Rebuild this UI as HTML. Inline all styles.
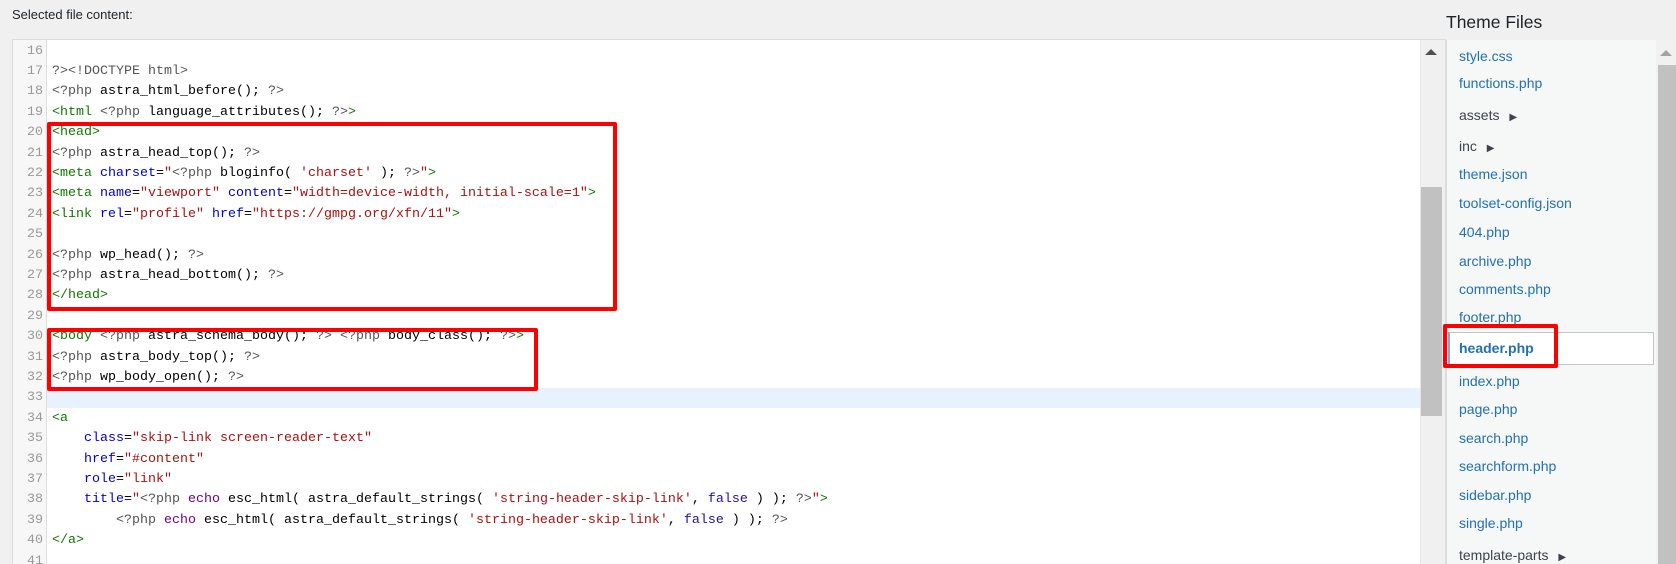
<!DOCTYPE html>
<html><head><style>
*{margin:0;padding:0;box-sizing:border-box}
html,body{width:1676px;height:564px;overflow:hidden}
body{background:#f0f0f1;position:relative;font-family:"Liberation Sans",sans-serif}
.abs{position:absolute}
#lbl{left:12px;top:7px;font-size:13px;color:#1d2327}
#ttl{left:1446px;top:12px;font-size:17.5px;color:#1d2327}
#ed{left:12px;top:39px;width:1434px;height:540px;background:#fff;border:1px solid #dcdcde}
#gut{left:13px;top:40px;width:34px;height:540px;background:#f7f7f7;border-right:1px solid #ddd}
.ln{position:absolute;left:13px;width:30px;text-align:right;font:13.33px "Liberation Mono",monospace;color:#999;height:20.4px;line-height:20.4px}
.cl{position:absolute;left:52px;font:13.33px "Liberation Mono",monospace;color:#000;white-space:pre;height:20.4px;line-height:20.4px}
.p{color:#555}.t{color:#170}.a{color:#00c}.s{color:#a11}.k{color:#708}.b{color:#219}
#hl{left:47px;top:388px;width:1373px;height:20px;background:#e8f2fe}
#sb{left:1420px;top:40px;width:25px;height:540px;background:#f0f0f0;border-left:1px solid #e6e6e6}
#sbt{left:1421px;top:187px;width:21px;height:229px;background:#c1c1c1}
#pan{left:1446px;top:40px;width:230px;height:540px;background:#f6f7f7;border-left:1px solid #dcdcde}
.f{position:absolute;left:1459px;font-size:14px;color:#2271b1;line-height:18px;height:18px;margin-top:-9px}
.d{color:#3c434a}
#sel{left:1448px;top:332px;width:206px;height:33px;background:#fff;border:1px solid #c3c4c7;border-left:2px solid #72aee6}
#rsb{left:1656px;top:40px;width:20px;height:540px;background:#f1f1f1}
#rsbt{left:1658px;top:65px;width:18px;height:520px;background:#c1c1c1}
.red{position:absolute;border:4.5px solid #f00;border-radius:2px}
.tri{position:absolute;width:0;height:0;border-left:6px solid transparent;border-right:6px solid transparent}
</style></head><body>
<div class="abs" id="lbl">Selected file content:</div>
<div class="abs" id="ttl">Theme Files</div>
<div class="abs" id="ed"></div>
<div class="abs" id="gut"></div>
<div class="abs" id="hl"></div>

<div class="ln" style="top:42px">16</div>
<div class="ln" style="top:62px">17</div>
<div class="ln" style="top:82px">18</div>
<div class="ln" style="top:103px">19</div>
<div class="ln" style="top:123px">20</div>
<div class="ln" style="top:144px">21</div>
<div class="ln" style="top:164px">22</div>
<div class="ln" style="top:184px">23</div>
<div class="ln" style="top:205px">24</div>
<div class="ln" style="top:225px">25</div>
<div class="ln" style="top:246px">26</div>
<div class="ln" style="top:266px">27</div>
<div class="ln" style="top:286px">28</div>
<div class="ln" style="top:307px">29</div>
<div class="ln" style="top:327px">30</div>
<div class="ln" style="top:348px">31</div>
<div class="ln" style="top:368px">32</div>
<div class="ln" style="top:388px">33</div>
<div class="ln" style="top:409px">34</div>
<div class="ln" style="top:429px">35</div>
<div class="ln" style="top:450px">36</div>
<div class="ln" style="top:470px">37</div>
<div class="ln" style="top:490px">38</div>
<div class="ln" style="top:511px">39</div>
<div class="ln" style="top:531px">40</div>
<div class="ln" style="top:552px">41</div>

<div class="cl" style="top:62px"><span class="p">?&gt;&lt;!DOCTYPE html&gt;</span></div>
<div class="cl" style="top:82px"><span class="p">&lt;?php</span> astra_html_before(); <span class="p">?&gt;</span></div>
<div class="cl" style="top:103px"><span class="t">&lt;html</span> <span class="p">&lt;?php</span> language_attributes(); <span class="p">?&gt;</span><span class="t">&gt;</span></div>
<div class="cl" style="top:123px"><span class="t">&lt;head&gt;</span></div>
<div class="cl" style="top:144px"><span class="p">&lt;?php</span> astra_head_top(); <span class="p">?&gt;</span></div>
<div class="cl" style="top:164px"><span class="t">&lt;meta</span> <span class="a">charset</span>=<span class="s">"</span><span class="p">&lt;?php</span> bloginfo( <span class="s">'charset'</span> ); <span class="p">?&gt;</span><span class="s">"</span><span class="t">&gt;</span></div>
<div class="cl" style="top:184px"><span class="t">&lt;meta</span> <span class="a">name</span>=<span class="s">"viewport"</span> <span class="a">content</span>=<span class="s">"width=device-width, initial-scale=1"</span><span class="t">&gt;</span></div>
<div class="cl" style="top:205px"><span class="t">&lt;link</span> <span class="a">rel</span>=<span class="s">"profile"</span> <span class="a">href</span>=<span class="s">"https://gmpg.org/xfn/11"</span><span class="t">&gt;</span></div>
<div class="cl" style="top:246px"><span class="p">&lt;?php</span> wp_head(); <span class="p">?&gt;</span></div>
<div class="cl" style="top:266px"><span class="p">&lt;?php</span> astra_head_bottom(); <span class="p">?&gt;</span></div>
<div class="cl" style="top:286px"><span class="t">&lt;/head&gt;</span></div>
<div class="cl" style="top:327px"><span class="t">&lt;body</span> <span class="p">&lt;?php</span> astra_schema_body(); <span class="p">?&gt;</span> <span class="p">&lt;?php</span> body_class(); <span class="p">?&gt;</span><span class="t">&gt;</span></div>
<div class="cl" style="top:348px"><span class="p">&lt;?php</span> astra_body_top(); <span class="p">?&gt;</span></div>
<div class="cl" style="top:368px"><span class="p">&lt;?php</span> wp_body_open(); <span class="p">?&gt;</span></div>
<div class="cl" style="top:409px"><span class="t">&lt;a</span></div>
<div class="cl" style="top:429px">    <span class="a">class</span>=<span class="s">"skip-link screen-reader-text"</span></div>
<div class="cl" style="top:450px">    <span class="a">href</span>=<span class="s">"#content"</span></div>
<div class="cl" style="top:470px">    <span class="a">role</span>=<span class="s">"link"</span></div>
<div class="cl" style="top:490px">    <span class="a">title</span>=<span class="s">"</span><span class="p">&lt;?php</span> <span class="k">echo</span> esc_html( astra_default_strings( <span class="s">'string-header-skip-link'</span>, <span class="b">false</span> ) ); <span class="p">?&gt;</span><span class="s">"</span><span class="t">&gt;</span></div>
<div class="cl" style="top:511px">        <span class="p">&lt;?php</span> <span class="k">echo</span> esc_html( astra_default_strings( <span class="s">'string-header-skip-link'</span>, <span class="b">false</span> ) ); <span class="p">?&gt;</span></div>
<div class="cl" style="top:531px"><span class="t">&lt;/a&gt;</span></div>

<div class="red" style="left:47px;top:122px;width:570px;height:189px"></div>
<div class="red" style="left:47px;top:328px;width:491px;height:63px"></div>

<div class="abs" id="sb"></div>
<div class="abs" id="sbt"></div>
<div class="tri" style="left:1425px;top:49px;border-bottom:6px solid #505050"></div>

<div class="abs" id="pan"></div>
<div class="abs" id="sel"></div>
<div class="f" style="top:56px">style.css</div>
<div class="f" style="top:83px">functions.php</div>
<div class="f d" style="top:115px">assets <span style="font-size:10px;margin-left:6px">&#9654;</span></div>
<div class="f d" style="top:146px">inc <span style="font-size:10px;margin-left:6px">&#9654;</span></div>
<div class="f" style="top:174px">theme.json</div>
<div class="f" style="top:203px">toolset-config.json</div>
<div class="f" style="top:232px">404.php</div>
<div class="f" style="top:261px">archive.php</div>
<div class="f" style="top:289px">comments.php</div>
<div class="f" style="top:317px">footer.php</div>
<div class="f" style="top:348px;font-weight:bold;color:#2271b1">header.php</div>
<div class="f" style="top:381px">index.php</div>
<div class="f" style="top:409px">page.php</div>
<div class="f" style="top:438px">search.php</div>
<div class="f" style="top:466px">searchform.php</div>
<div class="f" style="top:495px">sidebar.php</div>
<div class="f" style="top:523px">single.php</div>
<div class="f d" style="top:555px">template-parts <span style="font-size:10px;margin-left:6px">&#9654;</span></div>
<div class="red" style="left:1443px;top:324px;width:115px;height:44px"></div>

<div class="abs" id="rsb"></div>
<div class="abs" id="rsbt"></div>
<div class="tri" style="left:1660px;top:50px;border-bottom:6px solid #a3a3a3"></div>
</body></html>
